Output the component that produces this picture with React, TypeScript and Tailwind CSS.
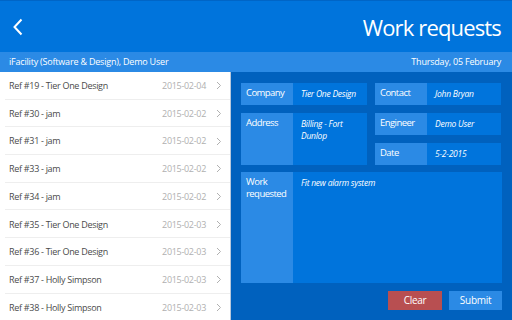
import React from "react";

const rows = [
  ["Ref #19 - Tier One Design", "2015-02-04"],
  ["Ref #30 - jam", "2015-02-02"],
  ["Ref #31 - jam", "2015-02-02"],
  ["Ref #33 - jam", "2015-02-02"],
  ["Ref #34 - jam", "2015-02-02"],
  ["Ref #35 - Tier One Design", "2015-02-03"],
  ["Ref #36 - Tier One Design", "2015-02-03"],
  ["Ref #37 - Holly Simpson", "2015-02-03"],
  ["Ref #38 - Holly Simpson", "2015-02-03"],
];

function Field({ label, value, className = "" }: { label: string; value: string; className?: string }) {
  return (
    <div className={`flex ${className}`}>
      <div className="w-[52px] shrink-0 bg-[#2b8ae5] px-[5px] py-[4px] text-[9.5px] leading-[12px] tracking-[-0.55px] text-white">{label}</div>
      <div className="flex-1 bg-[#0074dc] py-[5px] pl-[8px] pr-[4px] text-[8.5px] italic leading-[12px] tracking-[-0.25px] text-white">{value}</div>
    </div>
  );
}

export default function App() {
  return (
    <div className="flex h-[320px] w-[512px] flex-col overflow-hidden bg-white" style={{ fontFamily: '"Open Sans", sans-serif' }}>
      <div className="flex h-[52px] shrink-0 items-center justify-between border-t border-[#0065c6] bg-[#0074dc] pl-[12px] pr-[11px]">
        <svg width="12" height="18" viewBox="0 0 12 18" className="mt-[1px]">
          <path d="M9.5 1.5 L2.5 9 L9.5 16.5" stroke="white" strokeWidth="2" fill="none" />
        </svg>
        <div className="text-[22px] leading-none tracking-[-0.85px] text-white">Work requests</div>
      </div>
      <div className="flex h-[20px] shrink-0 items-center justify-between bg-[#2b8ae5] px-[9px] text-[9px] tracking-[-0.2px] text-white">
        <span>iFacility (Software &amp; Design), Demo User</span>
        <span className="pr-[2px]">Thursday, 05 February</span>
      </div>
      <div className="flex flex-1">
        <div className="w-[231px] shrink-0 border-r border-[#b8c8dc] bg-white">
          {rows.map(([t, d], i) => (
            <div key={i} className="ml-[5px] flex h-[27.7px] items-center border-b border-[#eeeeee] pl-[4px] pr-[8px] pt-[1px] text-[9px] tracking-[-0.3px]">
              <span className="flex-1 text-[#4a4a4a]">{t}</span>
              <span className="text-[#b0b0b0]">{d}</span>
              <svg width="6" height="9" viewBox="0 0 6 9" className="ml-[10px]">
                <path d="M1 1 L4.5 4.5 L1 8" stroke="#b0b0b0" strokeWidth="1" fill="none" />
              </svg>
            </div>
          ))}
        </div>
        <div className="flex flex-1 flex-col bg-[#0061be] px-[10px] pt-[11px]">
          <div className="flex gap-[8px]">
            <div className="flex w-[126px] flex-col gap-[8px]">
              <Field label="Company" value="Tier One Design" className="h-[22px]" />
              <Field label="Address" value="Billing - Fort Dunlop" className="h-[52px]" />
            </div>
            <div className="flex w-[126px] flex-col gap-[8px]">
              <Field label="Contact" value="John Bryan" className="h-[22px]" />
              <Field label="Engineer" value="Demo User" className="h-[22px]" />
              <Field label="Date" value="5-2-2015" className="h-[22px]" />
            </div>
          </div>
          <Field label="Work requested" value="Fit new alarm system" className="mt-[7px] h-[111px]" />
          <div className="mt-[8px] flex justify-end gap-[7px]">
            <button className="h-[19px] w-[54px] bg-[#b84f51] text-[10px] tracking-[-0.3px] text-white">Clear</button>
            <button className="h-[19px] w-[53px] bg-[#2b8ae5] text-[10px] tracking-[-0.3px] text-white">Submit</button>
          </div>
        </div>
      </div>
    </div>
  );
}
